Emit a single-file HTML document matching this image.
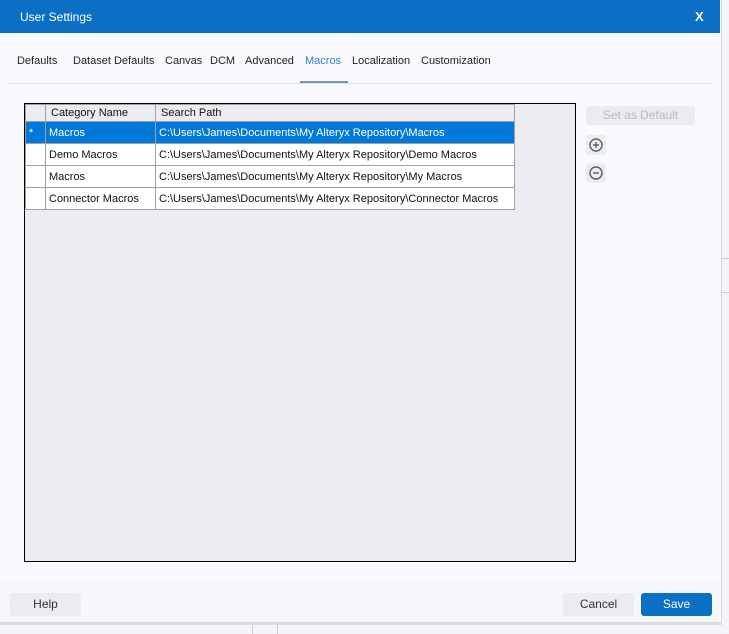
<!DOCTYPE html>
<html><head><style>
body{margin:0;width:729px;height:634px;background:#f3f4f7;font-family:"Liberation Sans",sans-serif;position:relative;overflow:hidden}
.a{position:absolute}
#dlg{left:0;top:0;width:721px;height:622px;background:#f9fafd;border-right:1px solid #d8dade;border-bottom:3px solid #dcdde1}
#title{left:0;top:0;width:720px;height:33px;background:#0b70c5;color:#fff;font-size:12px}
.tab{top:55px;font-size:11px;color:#222}
table{border-collapse:collapse;font-size:11px;table-layout:fixed}
td{border:1px solid #a0a0a0;height:21px;padding:0 3px;white-space:nowrap;color:#111;overflow:hidden}
td.f{padding:0 0 0 3px}
tr.h td{height:16px;padding-left:5px}
tr.s td{background:#0078d7;color:#fff}
.btn{background:#ebecef;border-radius:3px;font-size:12px;text-align:center;color:#333}
</style></head><body>
<div class="a" style="left:722px;top:258px;width:7px;height:1px;background:#ccc"></div>
<div class="a" style="left:722px;top:292px;width:7px;height:1px;background:#ccc"></div>
<div class="a" style="left:252px;top:624px;width:1px;height:10px;background:#ccc"></div>
<div class="a" style="left:277px;top:624px;width:1px;height:10px;background:#ccc"></div>
<div id="dlg" class="a">
<div id="title" class="a"><span class="a" style="left:20px;top:10px">User Settings</span><span class="a" style="left:695px;top:9px;font-weight:bold;font-size:13px">X</span></div>
<span class="a tab" style="left:17px">Defaults</span>
<span class="a tab" style="left:73px">Dataset Defaults</span>
<span class="a tab" style="left:165px">Canvas</span>
<span class="a tab" style="left:210px">DCM</span>
<span class="a tab" style="left:245px">Advanced</span>
<span class="a tab" style="left:305px;color:#2f7fd0">Macros</span>
<span class="a tab" style="left:352px">Localization</span>
<span class="a tab" style="left:421px">Customization</span>
<div class="a" style="left:7px;top:83px;width:706px;height:1px;background:#dcdee3"></div>
<div class="a" style="left:300px;top:81px;width:48px;height:2px;background:#7d93b5"></div>
<div class="a" style="left:24px;top:103px;width:550px;height:457px;background:#ebecef;border:1px solid #000">
<table style="width:489px">
<colgroup><col style="width:20px"><col style="width:110px"><col style="width:359px"></colgroup>
<tr class="h"><td class="f"></td><td>Category Name</td><td>Search Path</td></tr>
<tr class="s"><td class="f">*</td><td>Macros</td><td>C:\Users\James\Documents\My Alteryx Repository\Macros</td></tr>
<tr><td class="f" style="background:#fff"></td><td style="background:#fff">Demo Macros</td><td style="background:#fff">C:\Users\James\Documents\My Alteryx Repository\Demo Macros</td></tr>
<tr><td class="f" style="background:#fff"></td><td style="background:#fff">Macros</td><td style="background:#fff">C:\Users\James\Documents\My Alteryx Repository\My Macros</td></tr>
<tr><td class="f" style="background:#fff"></td><td style="background:#fff">Connector Macros</td><td style="background:#fff">C:\Users\James\Documents\My Alteryx Repository\Connector Macros</td></tr>
</table></div>
<div class="a btn" style="left:586px;top:106px;width:109px;height:19px;line-height:19px;color:#b4b8c0">Set as Default</div>
<div class="a btn" style="left:586px;top:135px;width:20px;height:20px"><svg width="20" height="20"><circle cx="10" cy="10" r="6" fill="none" stroke="#5a5f68" stroke-width="1.4"/><path d="M7 10h6M10 7v6" stroke="#5a5f68" stroke-width="1.4"/></svg></div>
<div class="a btn" style="left:586px;top:163px;width:20px;height:20px"><svg width="20" height="20"><circle cx="10" cy="10" r="6" fill="none" stroke="#5a5f68" stroke-width="1.4"/><path d="M7 10h6" stroke="#5a5f68" stroke-width="1.4"/></svg></div>
<div class="a" style="left:0;top:582px;width:720px;height:40px;background:#f5f7fa"></div>
<div class="a btn" style="left:10px;top:593px;width:71px;height:23px;line-height:23px">Help</div>
<div class="a btn" style="left:563px;top:593px;width:71px;height:23px;line-height:23px">Cancel</div>
<div class="a btn" style="left:641px;top:593px;width:71px;height:23px;line-height:23px;background:#0b70c5;color:#fff">Save</div>
</div>
</body></html>
